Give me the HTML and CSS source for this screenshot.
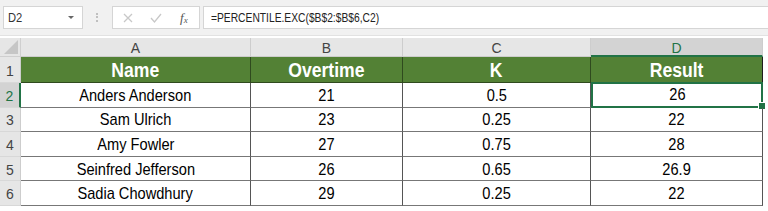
FILE: index.html
```html
<!DOCTYPE html>
<html>
<head>
<meta charset="UTF-8">
<title>PERCENTILE.EXC</title>
<link rel="stylesheet" href="styles.css">
</head>
<body>
<div class="bar">
  <div class="namebox"><span class="t">D2</span><span class="caret"></span></div>
  <div class="grip"></div>
  <div class="fxbox">
    <svg width="12" height="12" viewBox="0 0 12 12"><path d="M2 2L10 10M10 2L2 10" stroke="#c8c8c8" stroke-width="1.3"/></svg>
    <svg width="14" height="12" viewBox="0 0 14 12"><path d="M2 6L5.5 10L12 2" stroke="#c8c8c8" stroke-width="1.3" fill="none"/></svg>
    <span class="fx">f<sub>x</sub></span>
  </div>
  <div class="formula"><span class="t">=PERCENTILE.EXC($B$2:$B$6,C2)</span></div>
</div>
<div class="sheet">
  <div class="corner"><svg width="14" height="14" viewBox="0 0 14 14"><path d="M14 0V14H0Z" fill="#c6c6c6"/></svg></div>
  <div class="colhead">A</div>
  <div class="colhead">B</div>
  <div class="colhead">C</div>
  <div class="colhead sel">D</div>

  <div class="rowhead r1">1</div>
  <div class="cell head"><span class="t">Name</span></div>
  <div class="cell head"><span class="t">Overtime</span></div>
  <div class="cell head"><span class="t">K</span></div>
  <div class="cell head last"><span class="t">Result</span></div>

  <div class="rowhead sel">2</div>
  <div class="cell"><span class="t">Anders Anderson</span></div>
  <div class="cell"><span class="t">21</span></div>
  <div class="cell"><span class="t">0.5</span></div>
  <div class="cell last active"><span class="t">26</span><span class="handle"></span></div>

  <div class="rowhead">3</div>
  <div class="cell"><span class="t">Sam Ulrich</span></div>
  <div class="cell"><span class="t">23</span></div>
  <div class="cell"><span class="t">0.25</span></div>
  <div class="cell last"><span class="t">22</span></div>

  <div class="rowhead">4</div>
  <div class="cell"><span class="t">Amy Fowler</span></div>
  <div class="cell"><span class="t">27</span></div>
  <div class="cell"><span class="t">0.75</span></div>
  <div class="cell last"><span class="t">28</span></div>

  <div class="rowhead">5</div>
  <div class="cell"><span class="t">Seinfred Jefferson</span></div>
  <div class="cell"><span class="t">26</span></div>
  <div class="cell"><span class="t">0.65</span></div>
  <div class="cell last"><span class="t">26.9</span></div>

  <div class="rowhead">6</div>
  <div class="cell"><span class="t">Sadia Chowdhury</span></div>
  <div class="cell"><span class="t">29</span></div>
  <div class="cell"><span class="t">0.25</span></div>
  <div class="cell last"><span class="t">22</span></div>
</div>
</body>
</html>
```
FILE: styles.css
```css
body {
	margin: 0;
	background: #ffffff;
	font-family: "Liberation Sans", Arial, sans-serif;
	overflow: hidden;
}
.t {
	display: inline-block;
	transform: scaleX(0.86);
	white-space: nowrap;
}
.bar {
	display: flex;
	align-items: center;
	height: 36px;
	padding-left: 3px;
	background: #f1f1f1;
	border-bottom: 1px solid #e2e2e2;
	box-sizing: border-box;
}
.namebox {
	width: 80px;
	height: 23px;
	box-sizing: border-box;
	background: #ffffff;
	border: 1px solid #d5d5d5;
	display: flex;
	align-items: center;
	justify-content: space-between;
	padding: 0 8px 0 4px;
	font-size: 13px;
	color: #333333;
}
.namebox .t {
	transform-origin: left center;
}
.caret {
	width: 0;
	height: 0;
	border-left: 3px solid transparent;
	border-right: 3px solid transparent;
	border-top: 3px solid #666666;
}
.grip {
	width: 2px;
	height: 9px;
	margin: 0 12px 0 13px;
	border-left: 2px dotted #c0c0c0;
}
.fxbox {
	width: 88px;
	height: 23px;
	box-sizing: border-box;
	background: #ffffff;
	border: 1px solid #d5d5d5;
	display: flex;
	align-items: center;
	gap: 15px;
	padding-left: 9px;
}
.fx {
	font-family: "Liberation Serif", serif;
	font-style: italic;
	font-size: 13px;
	color: #555555;
	margin-left: 2px;
}
.fx sub {
	font-size: 9px;
	vertical-align: -1px;
}
.formula {
	flex: 1;
	height: 23px;
	margin-left: 3px;
	box-sizing: border-box;
	background: #ffffff;
	border: 1px solid #d5d5d5;
	border-right: none;
	font-size: 13px;
	line-height: 21px;
	padding-left: 7px;
	color: #222222;
}
.formula .t {
	transform: scaleX(0.79);
	transform-origin: left center;
}
.sheet {
	display: grid;
	grid-template-columns: 21px 230px 152px 188px 172px;
	grid-template-rows: 19px 26px repeat(5, 24.6px);
	margin-top: 2px;
	background: #ffffff;
}
.corner {
	background: #e6e6e6;
	border-right: 1px solid #cfcfcf;
	border-bottom: 1px solid #cfcfcf;
	display: flex;
	align-items: flex-end;
	justify-content: flex-end;
	padding: 0 2px 2px 0;
}
.colhead {
	background: #e6e6e6;
	border-right: 1px solid #cdcdcd;
	border-bottom: 1px solid #cdcdcd;
	text-align: center;
	font-size: 14px;
	line-height: 20px;
	color: #444444;
}
.colhead.sel {
	background: #d3d3d3;
	color: #217346;
	border-bottom: 2px solid #217346;
}
.rowhead {
	background: #e6e6e6;
	border-right: 1px solid #cdcdcd;
	border-bottom: 1px solid #d8d8d8;
	font-size: 14px;
	color: #444444;
	display: flex;
	align-items: center;
	justify-content: center;
	padding-top: 2px;
}
.rowhead.sel {
	background: #d3d3d3;
	color: #217346;
	border-right: 2px solid #217346;
}
.cell {
	border-right: 1px solid #555555;
	border-bottom: 1px solid #777777;
	font-size: 17px;
	color: #000000;
	display: flex;
	align-items: center;
	justify-content: center;
	padding-top: 2px;
	position: relative;
}
.cell.head {
	background: #538135;
	color: #ffffff;
	font-weight: bold;
	font-size: 20px;
	border-right: 1px solid #2f4a1e;
	border-bottom: 1px solid #2f4a1e;
}
.cell.head .t {
	transform: scaleX(0.88);
}
.cell.head.last {
	border-right: 1px solid #1e1e1e;
}
.cell.active {
	border: 2px solid #217346;
	border-top: none;
}
.cell.active::before {
	content: "";
	position: absolute;
	left: -2px;
	right: -2px;
	top: -1px;
	border-top: 2px solid #217346;
}
.handle {
	position: absolute;
	right: -5px;
	bottom: -4px;
	width: 6px;
	height: 6px;
	background: #217346;
	border: 1px solid #ffffff;
}
```
